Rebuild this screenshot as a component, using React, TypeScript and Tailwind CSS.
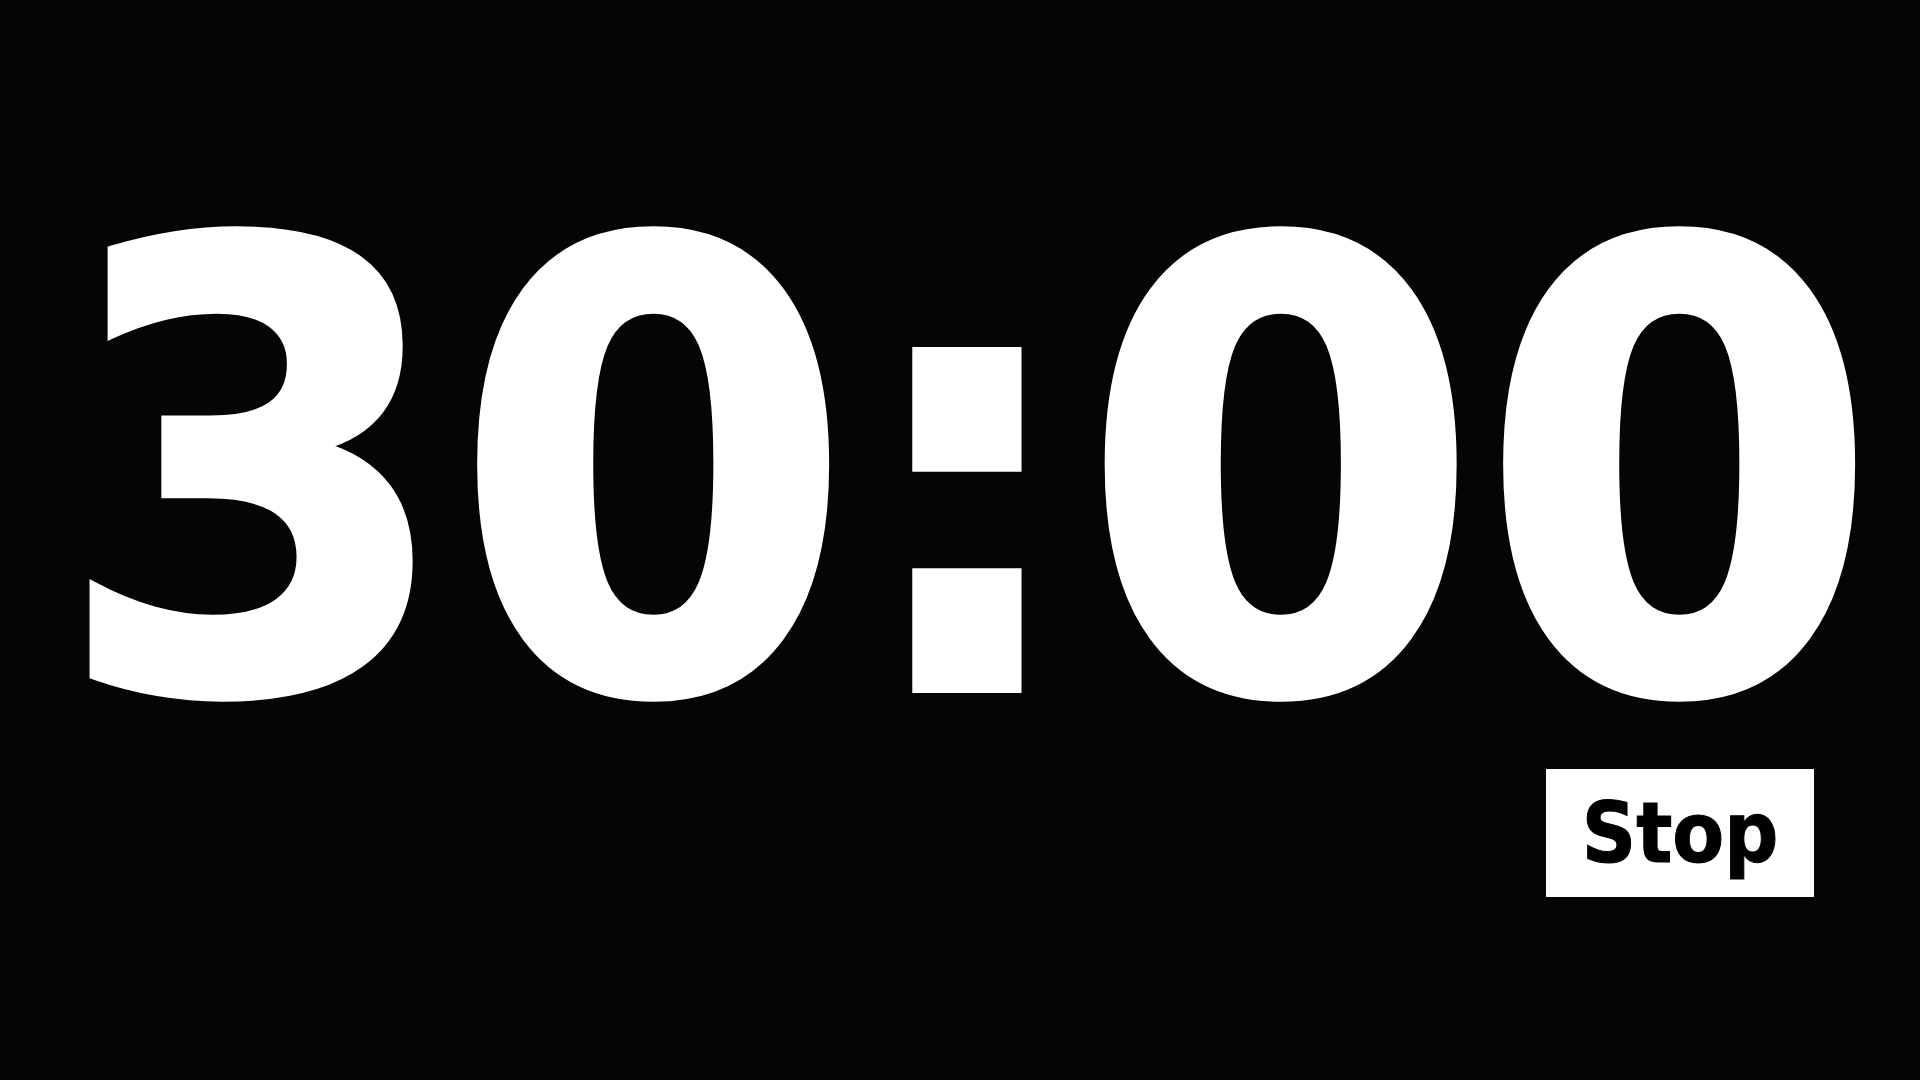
import React, { useState } from 'react';

export default function App() {
  const [running, setRunning] = useState(true);

  return (
    <div className="min-h-screen w-full bg-[#050505] text-white flex flex-col items-center overflow-hidden">
      {/* Countdown */}
      <div
        className="mt-[205px] text-[618px] leading-[540px] font-bold whitespace-nowrap scale-x-[1.03] translate-x-[7px] [-webkit-text-stroke:8px_#fff]"
        style={{ fontFamily: '"DejaVu Sans Condensed", "DejaVu Sans", sans-serif' }}
      >
        30:00
      </div>

      {/* Controls */}
      <div className="w-full flex justify-end pr-[106px] mt-[24px]">
        <button
          onClick={() => setRunning(!running)}
          className="w-[268px] h-[128px] bg-white text-black text-[84px] font-bold leading-none flex items-center justify-center [-webkit-text-stroke:1px_#000]"
          style={{ fontFamily: '"DejaVu Sans Condensed", "DejaVu Sans", sans-serif' }}
        >
          {running ? 'Stop' : 'Start'}
        </button>
      </div>
    </div>
  );
}
